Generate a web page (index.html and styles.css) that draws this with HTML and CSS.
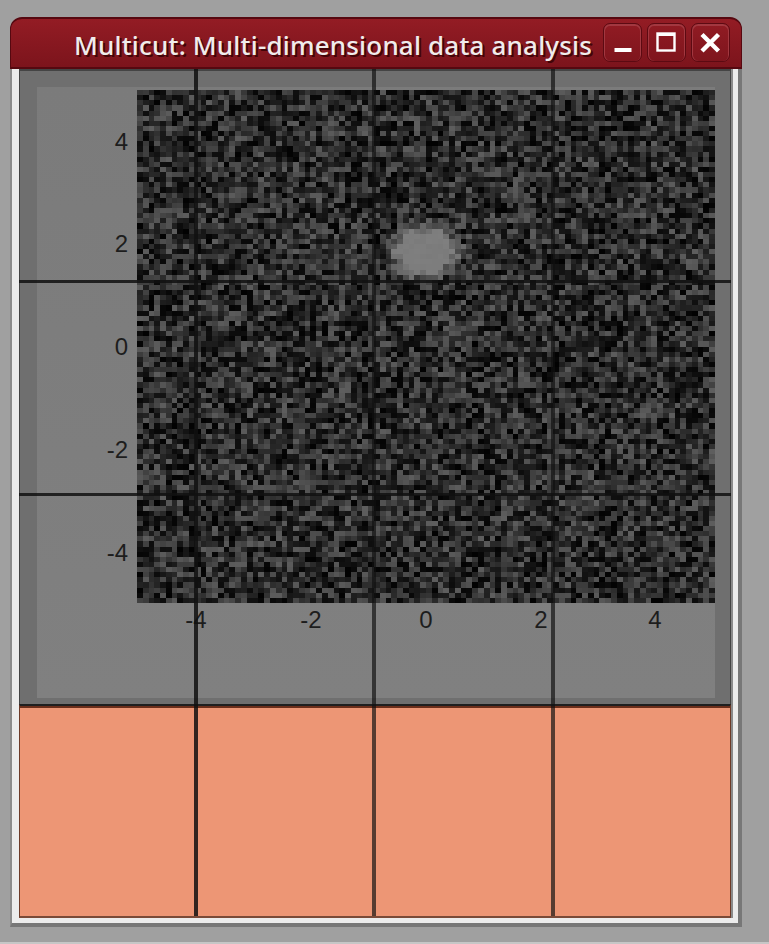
FILE: index.html
```html
<!DOCTYPE html>
<html lang="en">
<head>
<meta charset="utf-8">
<title>Multicut</title>
<link rel="stylesheet" href="styles.css">
</head>
<body>
<div class="window">
  <header class="titlebar">
    <div class="title">Multicut: Multi-dimensional data analysis</div>
    <div class="controls">
      <div class="btn"><svg viewBox="0 0 38 39" width="38" height="39"><rect x="10.5" y="25" width="17" height="4" fill="#fff"/></svg></div>
      <div class="btn"><svg viewBox="0 0 38 39" width="38" height="39"><rect x="9.5" y="10.5" width="17" height="17" fill="none" stroke="#fff" stroke-width="2.4"/><rect x="9" y="10" width="18" height="3" fill="#fff"/></svg></div>
      <div class="btn"><svg viewBox="0 0 38 39" width="38" height="39"><path d="M10 11.5 L26.5 28 M26.5 11.5 L10 28" fill="none" stroke="#fff" stroke-width="4.4"/></svg></div>
    </div>
  </header>
  <div class="frame">
    <div class="content">
      <section class="plot-area">
        <div class="plot">
          <canvas id="noise" class="heatmap" width="100" height="100"></canvas>
          <span class="tick ty t-y1">4</span>
          <span class="tick ty t-y2">2</span>
          <span class="tick ty t-y3">0</span>
          <span class="tick ty t-y4">-2</span>
          <span class="tick ty t-y5">-4</span>
          <span class="tick tx t-x1">-4</span>
          <span class="tick tx t-x2">-2</span>
          <span class="tick tx t-x3">0</span>
          <span class="tick tx t-x4">2</span>
          <span class="tick tx t-x5">4</span>
        </div>
      </section>
      <section class="lower"></section>
      <div class="vline v1"></div>
      <div class="vline v2"></div>
      <div class="vline v3"></div>
      <div class="hline h1"></div>
      <div class="hline h2"></div>
    </div>
  </div>
</div>
<script src="script.js"></script>
</body>
</html>
```
FILE: styles.css
```css
html, body { margin: 0; padding: 0; }
body {
  width: 769px;
  height: 925px;
  padding-top: 17px;
  background: #a0a0a0;
  border-bottom: 2px solid #c6c6c6;
  overflow: hidden;
}
.window {
  width: 732px;
  margin-left: 10px;
}
.titlebar {
  height: 52px;
  box-sizing: border-box;
  display: flex;
  align-items: flex-start;
  background: linear-gradient(#931c24, #7c141c);
  border: 2px solid #560810;
  border-width: 2px 1px 2px 1px;
  border-radius: 12px 12px 0 0;
}
.title {
  margin: 9px 0 0 63px;
  font-family: "Noto Sans", "Open Sans", sans-serif;
  font-size: 26px;
  line-height: 34px;
  font-weight: 500;
  letter-spacing: 0.18px;
  color: #f0ecec;
  text-shadow: 2px 2px 0 #420408;
  white-space: nowrap;
}
.controls {
  margin: 4px 11px 0 auto;
  display: flex;
  gap: 5px;
}
.btn {
  width: 39px;
  height: 39px;
  box-sizing: border-box;
  border: 1px solid #5c0a12;
  border-radius: 7px;
  box-shadow: inset 0 1px 0 1px #a23840, inset 1px 0 0 #9a3038;
  display: flex;
  align-items: center;
  justify-content: center;
}
.btn svg { display: block; flex: none; }
.frame {
  box-sizing: border-box;
  height: 858px;
  background: #ececec;
  background-clip: padding-box;
  border-left: 2px solid #8c8c8c;
  border-right: 4px solid #777;
  border-bottom: 4px solid #777;
  padding: 0 5px 5px 7px;
}
.content {
  position: relative;
  width: 712px;
  height: 849px;
  box-shadow: 2px 0 0 #8a8a8a;
}
.plot-area {
  box-sizing: border-box;
  height: 635px;
  background: #6f6f6f;
  border-top: 2px solid #444;
  border-left: 1px solid #444;
  border-right: 1px solid #444;
  padding: 16px 15px 6px 17px;
  display: flex;
}
.plot {
  position: relative;
  flex: 1;
  background: linear-gradient(#7b7b7b, #808080);
}
.heatmap {
  position: absolute;
  left: 100px;
  top: 3px;
  width: 578px;
  height: 513px;
  image-rendering: pixelated;
}
.tick {
  position: absolute;
  font-family: "Liberation Sans", Arial, sans-serif;
  font-size: 24px;
  line-height: 24px;
  color: #1d1d1d;
}
.ty { right: 587px; }
.tx { transform: translateX(-50%); top: 521px; }
.t-y1 { top: 43px; }
.t-y2 { top: 145px; }
.t-y3 { top: 248px; }
.t-y4 { top: 351px; }
.t-y5 { top: 454px; }
.t-x1 { left: 159px; }
.t-x2 { left: 274px; }
.t-x3 { left: 389px; }
.t-x4 { left: 504px; }
.t-x5 { left: 618px; }
.lower {
  box-sizing: border-box;
  height: 214px;
  background: #ed9675;
  border-top: 2px solid #1f1f1f;
  border-left: 1px solid #6d3a28;
  border-right: 1px solid #6d3a28;
  border-bottom: 2px solid #7a4a38;
  box-shadow: inset 0 2px 0 #6b2e1a;
}
.vline, .hline { position: absolute; pointer-events: none; }
.vline { top: 0; bottom: 2px; width: 4px; background: rgba(16, 16, 16, 0.85); }
.v1 { left: 175px; }
.v2 { left: 353px; background: rgba(16, 16, 16, 0.68); }
.v3 { left: 532px; background: rgba(16, 16, 16, 0.68); }
.hline { left: 0; right: 0; height: 3px; background: rgba(16, 16, 16, 0.85); }
.h1 { top: 211px; }
.h2 { top: 424px; }
```
FILE: script.js
```js
(function () {
  var ctx = document.getElementById('noise').getContext('2d');
  var state = 77123;
  // mulberry32
  function rnd() {
    state = (state + 0x6D2B79F5) | 0;
    var t = Math.imul(state ^ (state >>> 15), 1 | state);
    t = (t + Math.imul(t ^ (t >>> 7), 61 | t)) ^ t;
    return ((t ^ (t >>> 14)) >>> 0) / 4294967296;
  }
  for (var y = 0; y < 100; y++) {
    for (var x = 0; x < 100; x++) {
      var base = Math.pow(rnd(), 1.2) * 92 + 2;
      var dx = (x - 49.3) / 6.2;
      var dy = (y - 31) / 5.8;
      var d = Math.sqrt(dx * dx + dy * dy) + (rnd() - 0.5) * 0.25;
      var k = d < 0.72 ? 1 : d > 1.15 ? 0 : (1.15 - d) / 0.43;
      var v = base + (126 - base) * k;
      if (k === 1) v = 123 + rnd() * 4;
      v = Math.round(v);
      ctx.fillStyle = 'rgb(' + v + ',' + v + ',' + v + ')';
      ctx.fillRect(x, y, 1, 1);
    }
  }
})();
```
